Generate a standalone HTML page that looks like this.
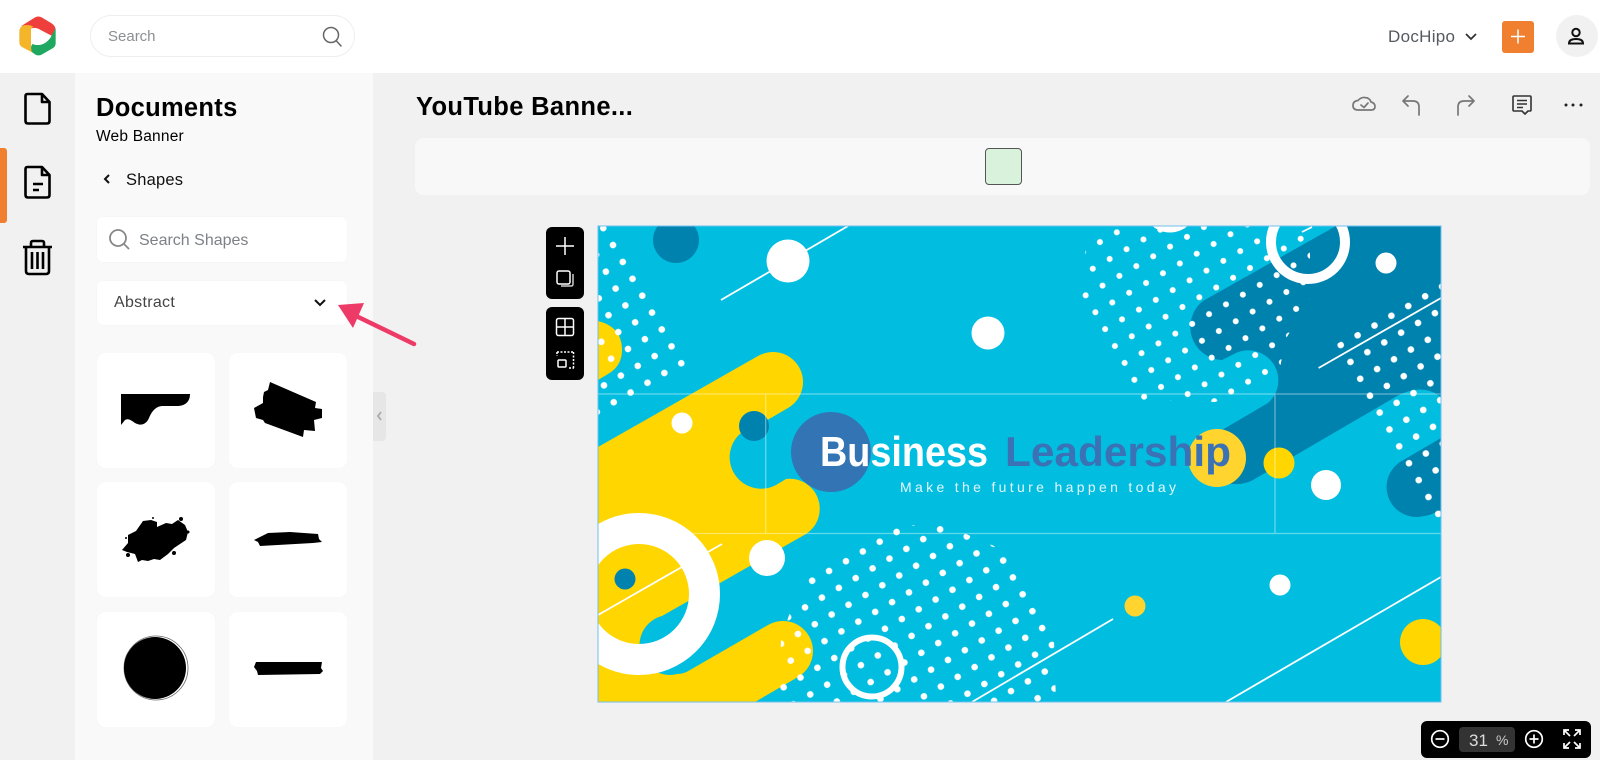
<!DOCTYPE html>
<html><head><meta charset="utf-8"><title>DocHipo</title>
<style>
html,body{margin:0;padding:0;width:1600px;height:760px;overflow:hidden;background:#f1f1f1;font-family:"Liberation Sans",sans-serif}
.a{position:absolute;box-sizing:border-box}
.t{position:absolute;white-space:nowrap;line-height:1}
svg{position:absolute;left:0;top:0}
.card{position:absolute;width:118px;height:115px;background:#fff;border-radius:8px;box-shadow:0 0 1px rgba(0,0,0,.06)}
</style></head><body>
<div class="a" style="left:0;top:0;width:1600px;height:73px;background:#fff"></div>
<div class="a" style="left:90px;top:15px;width:265px;height:42px;border:1px solid #eee;border-radius:21px;background:#fff"></div>
<div class="t" style="left:108px;top:29px;font-size:15px;color:#8b8f94">Search</div>
<div class="t" style="left:1388px;top:28px;font-size:17px;letter-spacing:.3px;color:#555a60">DocHipo</div>
<div class="a" style="left:1502px;top:21px;width:32px;height:32px;background:#f08030;border-radius:3px"></div>
<div class="a" style="left:1556px;top:15px;width:42px;height:42px;background:#f1f1f1;border-radius:50%"></div>

<div class="a" style="left:0;top:148px;width:7px;height:75px;background:#f08030;border-radius:0 3px 3px 0"></div>
<div class="a" style="left:75px;top:73px;width:298px;height:687px;background:#f9f9f9"></div>
<div class="a" style="left:373px;top:392px;width:13px;height:49px;background:#e6e6e6;border-radius:0 4px 4px 0"></div>
<div class="t" style="left:96px;top:96px;font-size:25.5px;font-weight:bold;letter-spacing:.3px;color:#000">Documents</div>
<div class="t" style="left:96px;top:129px;font-size:15.5px;letter-spacing:.2px;color:#000">Web Banner</div>
<div class="t" style="left:126px;top:172px;font-size:16.500px;letter-spacing:.2px;color:#111">Shapes</div>
<div class="a" style="left:97px;top:217px;width:250px;height:45px;background:#fff;border-radius:6px;box-shadow:0 0 1px rgba(0,0,0,.08)"></div>
<div class="t" style="left:139px;top:233px;font-size:16px;color:#7d8187">Search Shapes</div>
<div class="a" style="left:97px;top:281px;width:250px;height:44px;background:#fff;border-radius:6px;box-shadow:0 0 1px rgba(0,0,0,.08)"></div>
<div class="t" style="left:114px;top:295px;font-size:16px;letter-spacing:.3px;color:#444">Abstract</div>
<div class="card" style="left:97px;top:353px"></div>
<div class="card" style="left:229px;top:353px"></div>
<div class="card" style="left:97px;top:482px"></div>
<div class="card" style="left:229px;top:482px"></div>
<div class="card" style="left:97px;top:612px"></div>
<div class="card" style="left:229px;top:612px"></div>

<div class="t" style="left:416px;top:95px;font-size:25.5px;font-weight:bold;letter-spacing:.35px;color:#000">YouTube Banne...</div>
<div class="a" style="left:415px;top:138px;width:1175px;height:57px;background:#f8f8f8;border-radius:9px"></div>
<div class="a" style="left:985px;top:148px;width:37px;height:37px;background:#d9f2dc;border:1px solid #555;border-radius:4px"></div>
<div class="a" style="left:546px;top:227px;width:38px;height:72px;background:#000;border-radius:6px"></div>
<div class="a" style="left:546px;top:307px;width:38px;height:73px;background:#000;border-radius:6px"></div>
<div class="a" style="left:1421px;top:721px;width:170px;height:37px;background:#000;border-radius:6px"></div>
<div class="a" style="left:1459px;top:727px;width:56px;height:25px;background:#333;border-radius:4px"></div>
<div class="t" style="left:1469px;top:732px;font-size:17px;color:#ddd">31</div>
<div class="t" style="left:1496px;top:733px;font-size:14px;color:#ccc">%</div>

<svg width="1600" height="760" viewBox="0 0 1600 760" xmlns="http://www.w3.org/2000/svg">
<defs>
<pattern id="d1" patternUnits="userSpaceOnUse" width="19.5" height="19.5" patternTransform="translate(879.7 541.7) rotate(-30)"><g fill="#fff"><circle cx="0" cy="0" r="3.3"/><circle cx="19.5" cy="0" r="3.3"/><circle cx="0" cy="19.5" r="3.3"/><circle cx="19.5" cy="19.5" r="3.3"/></g></pattern>
<pattern id="d2" patternUnits="userSpaceOnUse" width="19.5" height="19.5" patternTransform="translate(1116.8 232.3) rotate(-30)"><g fill="#fff"><circle cx="0" cy="0" r="3"/><circle cx="19.5" cy="0" r="3"/><circle cx="0" cy="19.5" r="3"/><circle cx="19.5" cy="19.5" r="3"/></g></pattern>
<pattern id="d3" patternUnits="userSpaceOnUse" width="19.5" height="19.5" patternTransform="translate(1340.7 345) rotate(-30)"><g fill="#fff"><circle cx="0" cy="0" r="3.3"/><circle cx="19.5" cy="0" r="3.3"/><circle cx="0" cy="19.5" r="3.3"/><circle cx="19.5" cy="19.5" r="3.3"/></g></pattern>
<pattern id="d4" patternUnits="userSpaceOnUse" width="19.5" height="19.5" patternTransform="translate(613 245) rotate(-30)"><g fill="#fff"><circle cx="0" cy="0" r="3.3"/><circle cx="19.5" cy="0" r="3.3"/><circle cx="0" cy="19.5" r="3.3"/><circle cx="19.5" cy="19.5" r="3.3"/></g></pattern>
<clipPath id="cv"><rect x="598" y="226" width="843" height="476"/></clipPath>
</defs>

<!-- logo -->
<g transform="scale(.33333)">
<path d="M64 78 L105 52 Q115 47 125 52 L155 70 Q165 77 166 85 L160 110 L122 90 Q105 80 92 86 Q80 80 64 78Z" fill="#ef3f3c"/>
<path d="M58 95 Q58 83 68 77 Q85 72 100 80 L93 86 L93 130 Q92 145 102 160 L68 142 Q58 137 58 128Z" fill="#f5b52a"/>
<path d="M167 84 L167 130 Q167 140 156 146 L125 164 Q115 169 105 163 L96 156 Q90 142 97 132 Q130 143 152 112Z" fill="#1fa860"/>
<path d="M93 86 Q115 90 152 112 Q130 143 97 132 Q93 132 93 128Z" fill="#fff"/>
</g>
<!-- header search -->
<g fill="none" stroke="#666" stroke-width="1.500"><circle cx="331" cy="35" r="7.500"/><path d="M336.500 41 L341 46" stroke-linecap="round"/></g>
<path d="M1466 34 L1471 39 L1476 34" fill="none" stroke="#333" stroke-width="1.800"/>
<path d="M1518 29.500 V43.500 M1511 36.500 H1525" stroke="#fff" stroke-width="1.500"/>
<g fill="none" stroke="#111" stroke-width="2"><circle cx="1576" cy="32.500" r="3.700"/><path d="M1569 43.500 Q1569 39 1576 39 Q1583 39 1583 43.500 Z"/></g>

<!-- rail icons -->
<g fill="none" stroke="#000" stroke-width="2.600" stroke-linejoin="round">
<path d="M25.500 96 Q25.500 94 27.500 94 H42 L49.500 102 V121 Q49.500 123.500 47 123.500 H28 Q25.500 123.500 25.500 121Z"/><path d="M42 94 V102 H49.500"/>
<path d="M25.500 169 Q25.500 167 27.500 167 H42 L49.500 175 V195 Q49.500 197.500 47 197.500 H28 Q25.500 197.500 25.500 195Z"/><path d="M42 167 V175 H49.500"/><path d="M33 184 H43 M33 190 H39"/>
<path d="M23 247 H52 M31 246 V243 Q31 241 33 241 H42 Q44 241 44 243 V246 M26 248 V271 Q26 274 29 274 H46 Q49 274 49 271 V248 M32 252 V269 M37.500 252 V269 M43 252 V269"/>
</g>
<path d="M109 175 L105 179 L109 183" fill="none" stroke="#111" stroke-width="2"/>
<g fill="none" stroke="#888" stroke-width="1.800"><circle cx="118" cy="238" r="8"/><path d="M124 244 L128.500 248.500" stroke-linecap="round"/></g>
<path d="M315 300 L320 305 L325 300" fill="none" stroke="#111" stroke-width="2"/>
<path d="M381 412 L378 416 L381 420" fill="none" stroke="#aaa" stroke-width="1.800"/>

<!-- shapes -->
<path d="M121 394 H190 C190 401 186 406 177 406 H163 C156 406 152 411 149 418 C146 425 140 426 135 423 C131 420 128 418 125 420 L121 425Z"/>
<path d="M270 382 L316 402 L315 408 L322 409 L322 418 L314 420 L315 431 L304 430 L303 437 L265 423 L263 420 L256 418 L254 408 L263 403 L263 397 L264 392 L268 390Z"/>
<path d="M122 550 L128 543 L128 535 L136 531 L143 521 L151 520 L157 522 L157 527 L166 523 L172 524 L178 520 L185 525 L188 532 L186 540 L174 548 L168 554 L160 560 L154 559 L148 561 L142 560 L138 562 L135 554 L127 552Z"/>
<circle cx="181" cy="519" r="2"/><circle cx="188" cy="532" r="1.500"/><circle cx="128" cy="555" r="2"/><circle cx="174" cy="553" r="2"/><circle cx="153" cy="518" r="1"/><circle cx="126" cy="538" r="1"/>
<path d="M254 540 L268 533 L290 532 L318 534 L319 539 L322 542 L313 543 L260 546 L258 542Z"/>
<circle cx="155" cy="668" r="31"/><circle cx="156" cy="668" r="32" fill="none" stroke="#000" stroke-width=".8" opacity=".6"/>
<path d="M256 662 H322 L321 668 L323 671 L320 674 L258 675 L257 671 L254 667Z"/>

<!-- arrow -->
<path d="M352 314 L414 344" stroke="#ee3a66" stroke-width="4.500" stroke-linecap="round"/>
<path d="M338 305 L364 303 L353 328Z" fill="#ee3a66"/>

<!-- toolbar icons -->
<g fill="none" stroke="#777" stroke-width="1.700" stroke-linecap="round" stroke-linejoin="round">
<path d="M1358 110 Q1353 110 1353 105.500 Q1353 101 1358 100.500 Q1361 97 1365 97.500 Q1370 98 1371 102 Q1375 103 1375 106.500 Q1375 110 1371 110Z"/><path d="M1361 105 L1364 107.500 L1368 103"/>
<path d="M1419 115 V107 Q1419 101 1413 101 H1403 M1408 96 L1403 101 L1408 106"/>
<path d="M1458 115 V107 Q1458 101 1464 101 H1474 M1469 96 L1474 101 L1469 106"/>
</g>
<g fill="none" stroke="#333" stroke-width="1.600" stroke-linejoin="round"><path d="M1514 96 H1530 Q1531 96 1531 97 V110 Q1531 111 1530 111 H1528 L1525 114 L1522 111 H1514 Q1513 111 1513 110 V97 Q1513 96 1514 96Z"/><path d="M1517 100.500 H1527 M1517 104 H1527 M1517 107.500 H1523"/></g>
<g fill="#222"><circle cx="1566" cy="105" r="1.500"/><circle cx="1573" cy="105" r="1.500"/><circle cx="1581" cy="105" r="1.500"/></g>

<!-- float toolbars -->
<g fill="none" stroke="#fff" stroke-width="1.500"><path d="M565 237 V255 M556 246 H574"/>
<rect x="557" y="271" width="13" height="13" rx="2"/><path d="M573 274 V284 Q573 286 571 286 H561" stroke="#ccc"/>
<rect x="556.500" y="318.500" width="17" height="17" rx="2"/><path d="M565 318.500 V335.500 M556.500 327 H573.500"/>
<rect x="558" y="360" width="8" height="7" rx="1"/><path d="M557 352 H574 M573.500 352 V368 M569 368 H574" stroke-dasharray="2 1.500"/><path d="M557 352 V356" stroke-dasharray="2 1.500"/></g>
<!-- zoom controls -->
<g fill="none" stroke="#fff" stroke-width="1.700"><circle cx="1440" cy="739" r="8.300"/><path d="M1435.500 739 H1444.500"/>
<circle cx="1534" cy="739" r="8.300"/><path d="M1529.500 739 H1538.500 M1534 734.500 V743.500"/>
<path d="M1564 735 V730 H1569 M1580 735 V730 H1575 M1564 743 V748 H1569 M1580 743 V748 H1575 M1565 731 L1570 736 M1579 731 L1574 736 M1565 747 L1570 742 M1579 747 L1574 742"/></g>

<!-- canvas -->
<g clip-path="url(#cv)">
<rect x="598" y="226" width="843" height="476" fill="#01bee0"/>
<path d="M1336 226 H1441 V397 Q1420 381 1392 399 L1253 480 Q1240 487 1222 482 L1222 430 L1268 403 A30 30 0 0 0 1236 353 L1222 360 A33 33 0 0 1 1203 301Z" fill="#0082ae"/>
<path d="M1441 438 L1400 462 A30 30 0 0 0 1418 517 Q1430 516 1441 510Z" fill="#0082ae"/>
<circle cx="676" cy="240" r="23" fill="#0082ae"/>
<path d="M598 321 Q622 327 622 350 Q622 366 608 374 L598 380Z" fill="#ffd600"/>
<path d="M598 447 L758 356 A30 30 0 0 1 788 408 L757 426 A31.500 31.500 0 1 0 776 485 L786 479 A30 30 0 0 1 806 534 L662 616 A29 29 0 0 0 677 674 Q684 674 690 670 L768 625 A30 30 0 0 1 798 677 L755 702 H598Z" fill="#ffd600"/>
<polygon points="781,640 790,612 811,575 895,525 945,525 1008,552 1054,640 1056,702 779,702" fill="url(#d1)"/>
<polygon points="1110,226 1086,248 1082,272 1080,305 1128,382 1140,400 1215,402 1278,380 1285,340 1310,300 1310,226" fill="url(#d2)"/>
<polygon points="1330,348 1441,282 1441,525 1430,525 1370,410 1335,360" fill="url(#d3)"/>
<polygon points="598,226 608,226 692,368 610,415 598,418" fill="url(#d4)"/>
<circle cx="788" cy="261" r="21.500" fill="#fff"/>
<circle cx="988" cy="333" r="16.500" fill="#fff"/>
<circle cx="682" cy="423" r="10.500" fill="#fff"/>
<circle cx="754" cy="426" r="15" fill="#0082ae"/>
<circle cx="639" cy="594" r="65.500" fill="none" stroke="#fff" stroke-width="31"/>
<circle cx="625" cy="579" r="10.500" fill="#0082ae"/>
<circle cx="767" cy="558" r="18" fill="#fff"/>
<circle cx="1170" cy="205" r="27.500" fill="#fff"/>
<circle cx="1308" cy="242" r="37" fill="none" stroke="#fff" stroke-width="10"/>
<circle cx="1386" cy="263" r="10.500" fill="#fff"/>
<circle cx="872" cy="667" r="29.500" fill="none" stroke="#fff" stroke-width="6"/>
<g stroke="#fff" stroke-width="1.800" fill="none">
<path d="M721 300 L848 226"/><path d="M598 615 L722 544"/><path d="M1318.600 368 L1441 298"/><path d="M972 702 L1113 619"/><path d="M1226 702 L1441 577"/><path d="M1302 232 L1312 227"/>
</g>
<circle cx="831" cy="452" r="40" fill="#3274b4"/>
<circle cx="1217" cy="458" r="29" fill="#ffd42e"/>
<circle cx="1279" cy="463" r="15.500" fill="#ffd600"/>
<circle cx="1326" cy="485" r="15" fill="#fff"/>
<circle cx="1280" cy="585" r="10.500" fill="#fff"/>
<circle cx="1135" cy="606" r="10.500" fill="#ffd42e"/>
<circle cx="1423" cy="642" r="23" fill="#ffd600"/>
<text x="820" y="466" font-family="Liberation Sans" font-weight="bold" font-size="42" fill="#fff" textLength="168" lengthAdjust="spacingAndGlyphs">Business</text>
<text x="1005" y="466" font-family="Liberation Sans" font-weight="bold" font-size="42" fill="#3a72b5" textLength="226" lengthAdjust="spacingAndGlyphs">Leadership</text>
<text x="900" y="492" font-family="Liberation Sans" font-size="14" fill="#e4f6fb" textLength="276">Make the future happen today</text>
<g stroke="#fff" stroke-opacity=".4" stroke-width="1.300" fill="none">
<path d="M598 394 H1441 M598 533.500 H1441 M765.700 394 V533.500 M1275 394 V533.500"/>
</g>
</g>
<rect x="598" y="226" width="843" height="476" fill="none" stroke="#6fc0ee" stroke-width="1"/>
</svg>
</body></html>
